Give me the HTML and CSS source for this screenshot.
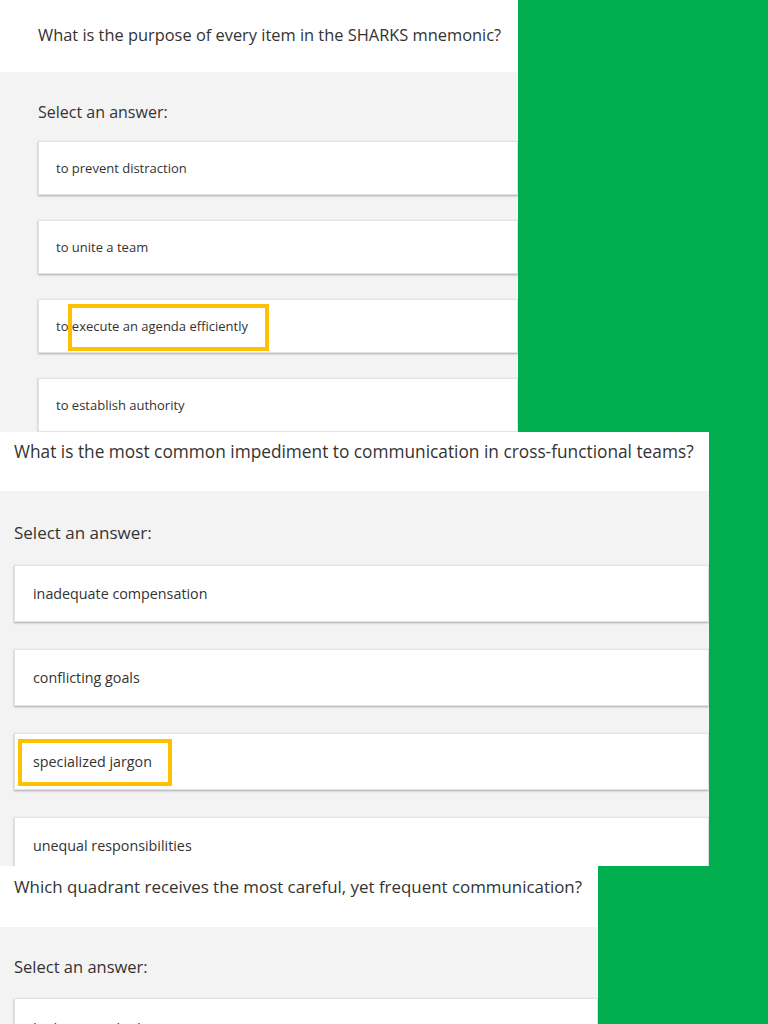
FILE: index.html
```html
<!DOCTYPE html>
<html lang="en">
<head>
<meta charset="UTF-8" />
<meta name="viewport" content="width=device-width, initial-scale=1" />
<title>Quiz answers</title>
<link rel="stylesheet" href="styles.css">
</head>
<body>

<!-- Question 1 -->
<section class="quiz quiz-one">
  <div class="question">What is the purpose of every item in the SHARKS mnemonic?</div>
  <div class="answers">
    <p class="prompt">Select an answer:</p>
    <div class="option">to prevent distraction</div>
    <div class="option">to unite a team</div>
    <div class="option">to execute an agenda efficiently<span class="mark mark-one"></span></div>
    <div class="option">to establish authority</div>
  </div>
</section>

<!-- Question 2 -->
<section class="quiz quiz-two">
  <div class="question">What is the most common impediment to communication in cross-functional teams?</div>
  <div class="answers">
    <p class="prompt">Select an answer:</p>
    <div class="option">inadequate compensation</div>
    <div class="option">conflicting goals</div>
    <div class="option">specialized jargon<span class="mark mark-two"></span></div>
    <div class="option">unequal responsibilities</div>
  </div>
</section>

<!-- Question 3 -->
<section class="quiz quiz-three">
  <div class="question">Which quadrant receives the most careful, yet frequent communication?</div>
  <div class="answers">
    <p class="prompt">Select an answer:</p>
    <div class="option">high power, high interest</div>
  </div>
</section>

</body>
</html>
```

FILE: styles.css
```css
body {
  margin: 0;
  background: #00ae50;
  font-family: "Open Sans", "Noto Sans", sans-serif;
  color: #333;
}
.quiz {
  background: #f3f3f3;
  overflow: hidden;
}
.question {
  background: white;
}
.option {
  position: relative;
  background: white;
  border: 1px solid #e2e2e2;
  box-shadow: 0 1px 2px rgba(0,0,0,0.3);
  box-sizing: border-box;
  display: flex;
  align-items: center;
}
.prompt {
  margin: 0;
}
.mark {
  position: absolute;
  border: 4px solid #ffc000;
  box-sizing: border-box;
}

/* first screenshot */
.quiz-one {
  width: 518px;
  height: 432px;
}
.quiz-one .question {
  height: 72px;
  padding: 23px 0 0 38px;
  box-sizing: border-box;
  font-size: 16.4px;
}
.quiz-one .answers {
  padding: 29px 0 0 38px;
}
.quiz-one .prompt {
  font-size: 16px;
  height: 40px;
}
.quiz-one .option {
  height: 54px;
  margin-bottom: 25px;
  padding-left: 17px;
  font-size: 13px;
}
.mark-one {
  left: 29px;
  top: 4px;
  width: 201px;
  height: 47px;
}

/* second screenshot */
.quiz-two {
  width: 709px;
  height: 434px;
}
.quiz-two .question {
  height: 59px;
  padding: 8px 0 0 14px;
  box-sizing: border-box;
  font-size: 17.3px;
}
.quiz-two .answers {
  padding: 30px 0 0 14px;
}
.quiz-two .prompt {
  font-size: 17px;
  height: 44px;
}
.quiz-two .option {
  height: 57px;
  margin-bottom: 27px;
  padding-left: 18px;
  font-size: 14.3px;
}
.mark-two {
  left: 3px;
  top: 5px;
  width: 154px;
  height: 47px;
}

/* third screenshot */
.quiz-three {
  width: 598px;
  height: 158px;
}
.quiz-three .question {
  height: 61px;
  padding: 9px 0 0 14px;
  box-sizing: border-box;
  font-size: 16.9px;
}
.quiz-three .answers {
  padding: 28px 0 0 14px;
}
.quiz-three .prompt {
  font-size: 16.5px;
  height: 43px;
}
.quiz-three .option {
  height: 57px;
  padding: 3px 0 0 18px;
  font-size: 14.5px;
}
```
